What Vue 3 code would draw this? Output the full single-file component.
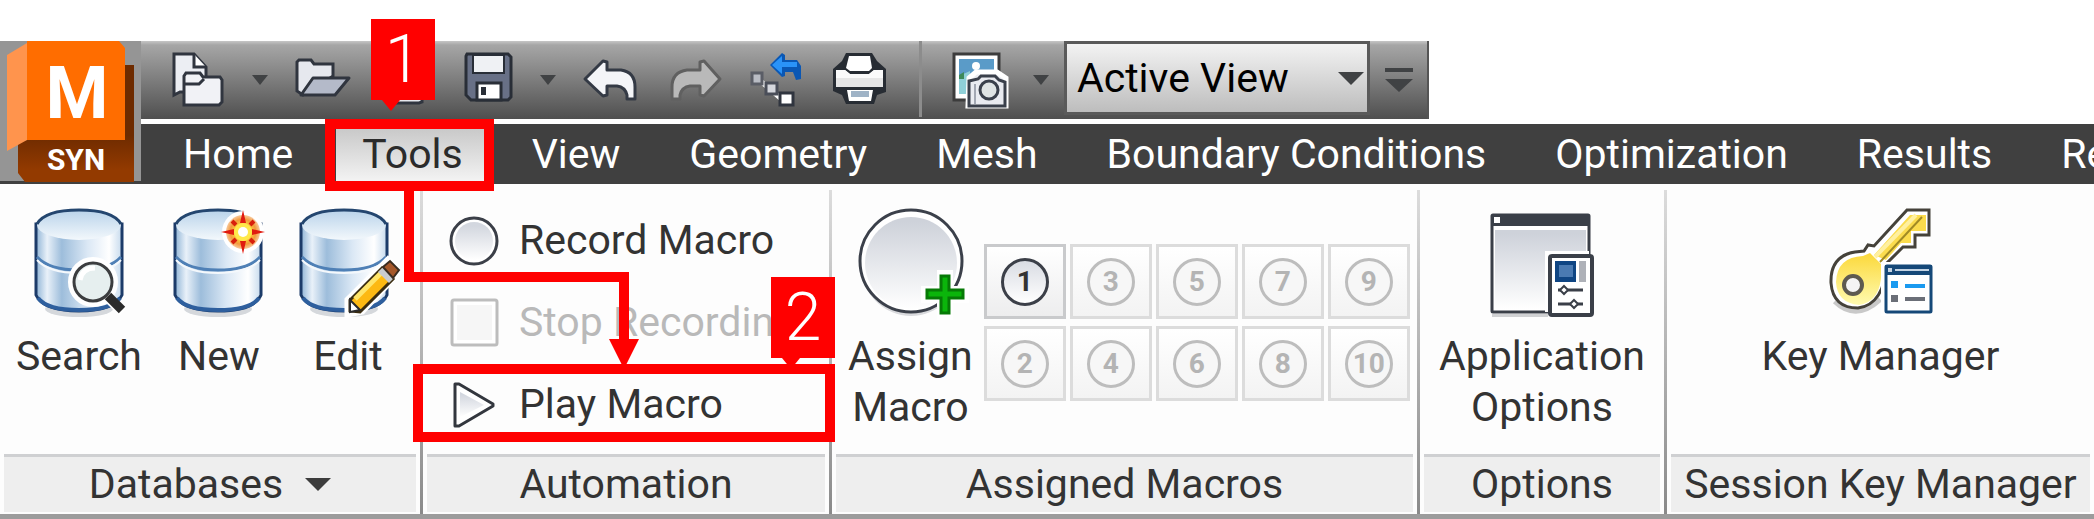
<template>
  <div class="app">
    <header class="head">
      <button class="logo" type="button" aria-label="Application menu">
        <svg width="141" height="141" viewBox="0 0 141 141">
          <defs>
            <linearGradient id="logoBase" x1="0" y1="0" x2="0" y2="1">
              <stop offset="0.6" stop-color="#6e2b00" />
              <stop offset="0.9" stop-color="#933a00" />
            </linearGradient>
          </defs>
          <path d="M18 100V132L25 141H134V24H110V90Z" fill="url(#logoBase)" />
          <path d="M7 14L27 2V99L7 110Z" fill="#ff944d" />
          <path d="M27 0H119L125 7V99H27Z" fill="#ff6d00" />
          <text x="77" y="77" class="logo-m">M</text>
          <text x="76" y="129" class="logo-syn">SYN</text>
        </svg>
      </button>

      <div class="quick">
        <div class="quick-tools">
          <button type="button" aria-label="New">
            <svg width="56" height="56" viewBox="0 0 56 56">
              <path d="M3 2H23L35 15V40H9L3 43Z" fill="#eceef3" stroke="#30353f" stroke-width="3" />
              <path d="M23 2V15H35" fill="#fff" stroke="#30353f" stroke-width="3" />
              <path d="M13 24L15 21H29L32 25H49L51 28V50L48 53H13Z" fill="#f1f2f6" stroke="#30353f" stroke-width="3" />
              <path d="M14 32H28L33 27" fill="none" stroke="#30353f" stroke-width="3" />
            </svg>
          </button>
          <button type="button" class="drop" aria-label="New options"><svg width="16" height="10"><path d="M0 0H16L8 10Z" fill="#404244" /></svg></button>
          <button type="button" aria-label="Open">
            <svg width="56" height="56" viewBox="0 0 56 56">
              <path d="M4 10L6 8H18L21 12H40V24L20 38L10 43L4 39Z" fill="#e6e8ee" stroke="#30353f" stroke-width="3" />
              <path d="M8 43L20 26H56L42 43Z" fill="#b4bac9" stroke="#30353f" stroke-width="3" stroke-linejoin="round" />
            </svg>
          </button>
          <button type="button" aria-label="Import">
            <svg width="56" height="56" viewBox="0 0 56 56">
              <path d="M12 12H46V50L43 51H14Z" fill="#e6e8ee" stroke="#30353f" stroke-width="3" />
            </svg>
          </button>
          <button type="button" aria-label="Save">
            <svg width="56" height="56" viewBox="0 0 56 56">
              <path d="M8 2H49L52 5V45L49 48H12L7 43V4Z" fill="#687086" stroke="#292e37" stroke-width="3" />
              <path d="M14 3H45V21H14Z" fill="#eff1f4" stroke="#292e37" stroke-width="2" />
              <path d="M18 31H42V48H18Z" fill="#fff" stroke="#292e37" stroke-width="3" />
              <path d="M22 35H27V43H22Z" fill="#292e37" />
            </svg>
          </button>
          <button type="button" class="drop" aria-label="Save options"><svg width="16" height="10"><path d="M0 0H16L8 10Z" fill="#404244" /></svg></button>
          <button type="button" aria-label="Undo">
            <svg width="56" height="56" viewBox="0 0 56 56">
              <path d="M4 27L22 9L26 10V18H40Q54 20 54 35V47H46V43Q44 35 36 34H26V43L22 44Z" fill="#f4f5f8" stroke="#343a45" stroke-width="3" stroke-linejoin="round" />
            </svg>
          </button>
          <button type="button" aria-label="Redo">
            <svg width="56" height="56" viewBox="0 0 56 56">
              <path d="M56 27L40 9L36 10V18H23Q8 20 8 35V47H16V43Q18 35 26 34H36V43L40 44Z" fill="#b9b9b9" stroke="#606060" stroke-width="3" stroke-linejoin="round" />
            </svg>
          </button>
          <button type="button" aria-label="Back to parent">
            <svg width="56" height="56" viewBox="0 0 56 56">
              <path d="M10 26L38 50" stroke="#fff" stroke-width="5" />
              <path d="M5 21H15V32H5Z" fill="#b9bcc4" stroke="#5a5d66" stroke-width="3" />
              <path d="M19 31H30V42H19Z" fill="#d5d7dd" stroke="#4a4e59" stroke-width="3" />
              <path d="M33 41H46V53H33Z" fill="#fff" stroke="#30353f" stroke-width="3" />
              <path d="M23 13L35 1L38 3V8H50L54 14V27L49 28L46 20H38V24L35 25Z" fill="#0a57b4" />
              <path d="M25 13L35 4V10H50V15H35V22Z" fill="#2a93f8" />
            </svg>
          </button>
          <button type="button" aria-label="Print">
            <svg width="56" height="56" viewBox="0 0 56 56">
              <path d="M16 1H42L47 9L56 17V40L47 43L44 52H16L12 43L3 39V17L12 9Z" fill="#272c33" />
              <path d="M19 4H40L42 16L39 19H20L16 16Z" fill="#fff" />
              <path d="M6 18H15L20 22H39L44 18H53V35H6Z" fill="#e6e6e6" />
              <path d="M6 18H15L20 22H39L44 18H53V26H6Z" fill="#fafafa" />
              <path d="M17 38H43L41 49H19Z" fill="#fff" />
              <path d="M21 39H39V45H21Z" fill="#9fb3c6" />
            </svg>
          </button>
          <i class="divider"></i>
          <button type="button" aria-label="Capture image">
            <svg width="56" height="56" viewBox="0 0 56 56">
              <path d="M2 2H47V48H2Z" fill="#fff" stroke="#3c3c3c" stroke-width="3" />
              <path d="M7 7H42V26L14 42H7Z" fill="#5a9bc8" />
              <path d="M7 24L18 19V30L14 42H7Z" fill="#8fd0d8" />
              <path d="M7 23L12 20V27H7Z" fill="#3c8a5a" />
              <circle cx="24" cy="14" r="4" fill="#fff" />
              <path d="M17 26L24 20H45L54 26V54H16Z" fill="#e9ebf0" stroke="#fff" stroke-width="5" />
              <path d="M17 29L26 27L29 24H43L47 28L53 30V54H17Z" fill="#e9ebf0" stroke="#3a404b" stroke-width="3" />
              <circle cx="37" cy="38" r="9" fill="#dfe4e4" stroke="#3a404b" stroke-width="3" />
              <path d="M23 32V52" stroke="#a2a7b2" stroke-width="2" />
            </svg>
          </button>
          <button type="button" class="drop" aria-label="Capture options"><svg width="16" height="10"><path d="M0 0H16L8 10Z" fill="#404244" /></svg></button>
        </div>
        <div class="combo">
          <select v-model="view" aria-label="View">
            <option>Active View</option>
          </select>
          <svg class="combo-arrow" width="26" height="13"><path d="M0 0H26L13 13Z" fill="#404244" /></svg>
        </div>
        <button type="button" class="more" aria-label="Customize">
          <svg width="28" height="24"><path d="M0 0H28V4H0ZM0 11H28L14 24Z" fill="#404244" /></svg>
        </button>
      </div>

      <nav class="tabs">
        <a v-for="tab in tabs" :key="tab" href="#" class="tab" :class="{ active: tab === current }" @click.prevent="current = tab">{{ tab }}</a>
      </nav>
    </header>

    <main class="ribbon">
      <section class="panel">
        <div class="panel-body databases">
          <button type="button" class="big">
            <svg width="104" height="112" viewBox="0 0 104 112">
              <defs>
                <linearGradient id="dbSide">
                  <stop offset="0" stop-color="#8fb4d6" />
                  <stop offset="0.13" stop-color="#e9f1f9" />
                  <stop offset="0.3" stop-color="#9dbddb" />
                  <stop offset="0.6" stop-color="#dbe8f5" />
                  <stop offset="0.85" stop-color="#ffffff" />
                  <stop offset="1" stop-color="#c6daed" />
                </linearGradient>
                <linearGradient id="dbTop" x1="0" y1="0" x2="0" y2="1">
                  <stop offset="0" stop-color="#b9d3ea" />
                  <stop offset="1" stop-color="#f3f8fc" />
                </linearGradient>
                <symbol id="db" viewBox="0 0 94 112" width="94" height="112">
                  <ellipse cx="46" cy="102" rx="34" ry="8" fill="#d5d8dc" />
                  <path d="M3 17V88Q10 104 46 104Q82 104 89 88V17Z" fill="url(#dbSide)" stroke="#1c3b69" stroke-width="3" />
                  <ellipse cx="46" cy="18" rx="42" ry="15" fill="url(#dbTop)" />
                  <path d="M4 17Q12 3 46 3Q80 3 88 17" fill="none" stroke="#24466f" stroke-width="3" />
                  <path d="M4 50Q16 63 46 63Q76 63 88 50" fill="none" stroke="#4f80b6" stroke-width="3" />
                  <path d="M4 53Q16 66 46 66Q76 66 88 53" fill="none" stroke="#f4f8fc" stroke-width="2" />
                  <path d="M5 91Q14 103 46 103Q78 103 87 91" fill="none" stroke="#2e5f9e" stroke-width="4" />
                </symbol>
              </defs>
              <use href="#db" x="6" />
              <g fill="none" stroke="#fff" stroke-width="10">
                <circle cx="66" cy="75" r="20" /><path d="M80 90L96 105" />
              </g>
              <path d="M81 89L95 103" stroke="#2b2b2b" stroke-width="9" />
              <circle cx="66" cy="75" r="19" fill="#e6efef" stroke="#3b3d3f" stroke-width="3" />
              <path d="M53 73Q55 61 68 61" fill="none" stroke="#fff" stroke-width="5" />
            </svg>
            <span>Search</span>
          </button>
          <button type="button" class="big">
            <svg width="104" height="112" viewBox="0 0 104 112">
              <defs>
                <radialGradient id="glow">
                  <stop offset="0.15" stop-color="#ffffff" />
                  <stop offset="0.35" stop-color="#ffe23a" />
                  <stop offset="0.75" stop-color="#f39a3c" />
                  <stop offset="1" stop-color="#f8c89a" />
                </radialGradient>
              </defs>
              <use href="#db" x="5" />
              <circle cx="76" cy="25" r="21" fill="#fff" />
              <circle cx="76" cy="25" r="17" fill="url(#glow)" />
              <path d="M76 3L79 16H73ZM76 47L79 34H73ZM54 25L67 22V28ZM98 25L85 22V28Z" fill="#e01b10" />
              <path d="M65 14L69 18M87 14L83 18M65 36L69 32M87 36L83 32" stroke="#d8200c" stroke-width="4" />
              <circle cx="76" cy="25" r="9" fill="#ffe84a" />
              <circle cx="76" cy="25" r="5" fill="#fff" />
            </svg>
            <span>New</span>
          </button>
          <button type="button" class="big">
            <svg width="104" height="112" viewBox="0 0 104 112">
              <use href="#db" x="2" />
              <path d="M52 107V93L92 53L104 64L66 104Z" fill="#fff" stroke="#fff" stroke-width="7" />
              <path d="M54 104V93L86 61L97 72L64 105Z" fill="#fdb913" stroke="#3a2c10" stroke-width="3" />
              <path d="M59 92L86 65" stroke="#ffe56a" stroke-width="5" />
              <path d="M54 105V93L64 103Z" fill="#fff" stroke="#2b2b2b" stroke-width="2" />
              <path d="M82 65L87 60L98 71L93 76Z" fill="#c9ccd0" />
              <path d="M87 60L94 54L103 63L97 71Z" fill="#a5582a" stroke="#3a2c20" stroke-width="2" />
            </svg>
            <span>Edit</span>
          </button>
        </div>
        <h2 class="caption">Databases <svg width="26" height="13"><path d="M0 0H26L13 13Z" fill="#3c3c3c" /></svg></h2>
      </section>

      <section class="panel">
        <div class="panel-body automation">
          <button type="button" class="row">
            <svg width="49" height="49" viewBox="0 0 49 49">
              <defs>
                <linearGradient id="silver" x1="0" y1="0" x2="0" y2="1">
                  <stop offset="0.1" stop-color="#d3d7df" />
                  <stop offset="1" stop-color="#ffffff" />
                </linearGradient>
              </defs>
              <circle cx="24" cy="25" r="23" fill="#fff" stroke="#3b3f48" stroke-width="3" />
              <circle cx="24" cy="25" r="19" fill="url(#silver)" />
            </svg>
            Record Macro
          </button>
          <button type="button" class="row" disabled>
            <svg width="49" height="49" viewBox="0 0 49 49">
              <rect x="2" y="2" width="45" height="45" rx="2" fill="#fff" stroke="#bdbdbd" stroke-width="3" />
              <rect x="7" y="7" width="35" height="35" fill="#f6f6f6" />
            </svg>
            Stop Recording
          </button>
          <button type="button" class="row">
            <svg width="49" height="49" viewBox="0 0 49 49">
              <path d="M5 4H9L43 24V26L9 46H5Z" fill="#fff" stroke="#33373e" stroke-width="3" stroke-linejoin="round" />
              <path d="M10 12L34 25L10 37Z" fill="url(#silver)" />
            </svg>
            Play Macro
          </button>
        </div>
        <h2 class="caption">Automation</h2>
      </section>

      <section class="panel">
        <div class="panel-body assigned">
          <button type="button" class="big">
            <svg width="104" height="112" viewBox="0 0 104 112">
              <defs>
                <linearGradient id="disc" x1="0" y1="0" x2="0" y2="1">
                  <stop offset="0.05" stop-color="#ced2da" />
                  <stop offset="1" stop-color="#ffffff" />
                </linearGradient>
              </defs>
              <ellipse cx="53" cy="58" rx="50" ry="51" fill="#d9dadd" />
              <circle cx="53" cy="54" r="51" fill="#fff" stroke="#3b404a" stroke-width="3" />
              <circle cx="53" cy="56" r="46" fill="url(#disc)" />
              <path d="M82 66H92V82H108V93H92V110H82V93H66V82H82Z" fill="#fff" stroke="#fff" stroke-width="6" />
              <path d="M83 69H91V83H105V91H91V106H83V91H69V83H83Z" fill="#0bb50b" stroke="#077a07" stroke-width="3" />
            </svg>
            <span>Assign<br />Macro</span>
          </button>
          <div class="slots">
            <button v-for="n in slots" :key="n" type="button" class="slot" :disabled="n !== 1"><span>{{ n }}</span></button>
          </div>
        </div>
        <h2 class="caption">Assigned Macros</h2>
      </section>

      <section class="panel">
        <div class="panel-body centered">
          <button type="button" class="big">
            <svg width="104" height="112" viewBox="0 0 104 112">
              <path d="M2 107H58V110H2Z" fill="#d0d1d3" />
              <rect x="2" y="8" width="97" height="97" rx="1" fill="#fff" stroke="#3a3f48" stroke-width="3" />
              <path d="M2 8H99V19H2Z" fill="#3a3f48" />
              <path d="M4 10H10V16H4Z" fill="#fff" />
              <rect x="5" y="23" width="91" height="79" fill="url(#disc)" />
              <path d="M55 44H99V105H55Z" fill="#fff" />
              <rect x="60" y="49" width="42" height="59" rx="2" fill="#fff" stroke="#3a3f48" stroke-width="4" />
              <path d="M65 54H86V75H65Z" fill="#0f4583" />
              <path d="M69 58H83V70H69Z" fill="#4a7ab2" />
              <path d="M89 54H96V75H89Z" fill="#aeb1b8" />
              <path d="M68 83H93M68 97H93" stroke="#3a3f48" stroke-width="3" />
              <path d="M74 79L78 83L74 87L70 83ZM84 93L88 97L84 101L80 97Z" fill="#fff" stroke="#3a3f48" stroke-width="2" />
            </svg>
            <span>Application<br />Options</span>
          </button>
        </div>
        <h2 class="caption">Options</h2>
      </section>

      <section class="panel last">
        <div class="panel-body centered">
          <button type="button" class="big">
            <svg width="104" height="112" viewBox="0 0 104 112">
              <defs>
                <linearGradient id="gold" x1="0" y1="0" x2="0" y2="1">
                  <stop offset="0" stop-color="#fbd83a" />
                  <stop offset="1" stop-color="#fffbb0" />
                </linearGradient>
              </defs>
              <path d="M7 94Q28 114 52 92" fill="none" stroke="#c9c9c9" stroke-width="6" />
              <path d="M79 3H101V28H87V40H75L59 56Q56 98 30 101Q5 101 3 76Q2 49 27 45L36 44L40 38L46 39Z" fill="#fff" stroke="#45423a" stroke-width="3" />
              <path d="M82 8H98V24H83V36H73L58 53L46 48Z" fill="#fbdc4d" />
              <path d="M94 10L52 55" stroke="#a08a25" stroke-width="2" />
              <path d="M88 8L47 50" stroke="#fff0a0" stroke-width="4" />
              <path d="M42 46L53 57Q56 94 31 98Q9 96 8 75Q9 50 35 49Z" fill="url(#gold)" />
              <circle cx="25" cy="78" r="9" fill="#f4f4f4" stroke="#5d5a50" stroke-width="4" />
              <path d="M53 55H104V109H53Z" fill="#fff" />
              <rect x="58" y="59" width="45" height="46" rx="1" fill="#fff" stroke="#154878" stroke-width="3" />
              <path d="M57 58H104V68H57Z" fill="#154878" />
              <path d="M60 61H64V65H60ZM67 62H101V64H67Z" fill="#c3d3e3" />
              <path d="M63 74H70V81H63ZM77 77H97V81H77Z" fill="#1a9af0" />
              <path d="M63 88H70V95H63ZM77 90H97V94H77Z" fill="#6b6f78" />
            </svg>
            <span>Key Manager</span>
          </button>
        </div>
        <h2 class="caption">Session Key Manager</h2>
      </section>
    </main>

    <!-- tutorial callouts over the ribbon -->
    <div class="mark mark-tools"></div>
    <div class="mark mark-play"></div>
    <svg class="route" width="235" height="180" viewBox="0 0 235 180">
      <path d="M5 0V86H220V152" fill="none" stroke="#f00" stroke-width="10" />
      <path d="M205 148H235L220 178Z" fill="#f00" />
    </svg>
    <div class="step step-one">1</div>
    <div class="step step-two">2</div>
  </div>
</template>

<script setup>
import { ref } from "vue";

// ribbon tabs
const tabs = ['Home', 'Tools', 'View', 'Geometry', 'Mesh', 'Boundary Conditions', 'Optimization', 'Results', 'Report']
// current tab
const current = ref('Tools')
// selected view
const view = ref('Active View')
// macro slots, filled row by row
const slots = [1, 3, 5, 7, 9, 2, 4, 6, 8, 10]
</script>

<style>
body {
  margin: 0;
  background: #fff;
}
</style>

<style scoped>
.app {
  position: relative;
  overflow: hidden;
  padding-top: 41px;
  font-family: Roboto, "Noto Sans CJK KR", sans-serif;
  font-size: 41px;
  color: #333;
}

svg {
  display: block;
  flex: none;
  overflow: visible;
}

button {
  margin: 0;
  padding: 0;
  border: 0;
  background: none;
  font: inherit;
  color: inherit;
}

.head {
  display: grid;
  grid-template-columns: 141px minmax(0, 1fr);
  grid-template-rows: 78px 65px;
}

.logo {
  grid-row: 1 / 3;
  background: #959595;
  border-bottom: 3px solid #404040;
}

.logo-m,
.logo-syn {
  font-weight: 700;
  fill: #fff;
  text-anchor: middle;
}

.logo-m {
  font-size: 72px;
}

.logo-syn {
  font-size: 30px;
}

.quick {
  display: flex;
  justify-self: start;
  border-right: 2px solid #555;
  background: linear-gradient(#c6c6c6 0, #a6a6a6 4px, #4f4f4f 100%);
}

.quick-tools {
  display: flex;
  align-items: center;
  gap: 27px;
  padding-left: 30px;
}

.quick-tools .drop {
  margin: 0 -2px;
}

.divider {
  align-self: stretch;
  width: 3px;
  margin: 0 3px 2px 6px;
  background: #8c8c8c;
}

.combo {
  position: relative;
  width: 306px;
  margin: 0 0 4px 17px;
}

.combo select {
  appearance: none;
  box-sizing: border-box;
  width: 100%;
  height: 100%;
  padding: 0 0 0 10px;
  border: 3px solid #5a5a5a;
  border-radius: 0;
  background: linear-gradient(#f3f3f3, #bdbdbd);
  font: inherit;
  color: #000;
}

.combo-arrow {
  position: absolute;
  top: 31px;
  right: 6px;
  pointer-events: none;
}

.more {
  display: flex;
  align-items: center;
  justify-content: center;
  width: 57px;
}

.tabs {
  display: flex;
  gap: 17px;
  min-width: 0;
  margin-top: 5px;
  padding: 5px 0 3px 16px;
  background: #404040;
  overflow: hidden;
}

.tab {
  flex: none;
  padding: 0 26px;
  line-height: 50px;
  color: #fff;
  text-decoration: none;
  white-space: nowrap;
}

.tab.active {
  background: linear-gradient(#c9c9c9, #f3f3f3);
  color: #2b2b2b;
}

.ribbon {
  display: grid;
  grid-template-columns: 423fr 409fr 588fr 247fr 427fr;
  border-bottom: 5px solid #9c9c9c;
  background: #fdfdfd;
}

.panel {
  display: flex;
  flex-direction: column;
  min-width: 0;
  padding-right: 3px;
  background: linear-gradient(#dcdcdc, #8a8a8a) right bottom / 3px calc(100% - 6px) no-repeat;
}

.panel.last {
  background: none;
  padding-right: 0;
}

.panel-body {
  flex: 1;
  display: flex;
  align-items: flex-start;
  padding: 23px 0 21px;
}

.caption {
  display: flex;
  align-items: center;
  justify-content: center;
  gap: 22px;
  margin: 0 4px 2px;
  border-top: 3px solid #cfd0d2;
  background: #eee;
  font-size: 41px;
  font-weight: 400;
  line-height: 55px;
  white-space: nowrap;
}

.big {
  display: flex;
  flex-direction: column;
  align-items: center;
  gap: 12px;
  line-height: 51px;
}

.databases {
  gap: 25px;
  padding-left: 16px;
}

.panel-body.automation {
  flex-direction: column;
  padding: 15px 0 9px 27px;
}

.row {
  display: flex;
  align-items: center;
  gap: 20px;
  height: 82px;
  white-space: nowrap;
}

.row:disabled {
  color: #b9b9b9;
}

.assigned {
  gap: 11px;
  padding-left: 16px;
}

.slots {
  display: grid;
  grid-template-columns: repeat(5, 82px);
  gap: 7px 4px;
  margin-top: 37px;
}

.slot {
  display: flex;
  align-items: center;
  justify-content: center;
  height: 75px;
  border: 3px solid #c9cacc;
  background: linear-gradient(#fff, #ededee);
  font-size: 28px;
  font-weight: 700;
}

.slot span {
  box-sizing: border-box;
  width: 48px;
  height: 48px;
  border: 3px solid #3b3f48;
  border-radius: 50%;
  background: linear-gradient(#d9dce3, #fff);
  line-height: 42px;
  text-align: center;
}

.slot:disabled {
  border-color: #dcdcdc;
  background: linear-gradient(#fff, #f3f3f3);
  color: #b4b4b4;
}

.slot:disabled span {
  border-color: #bdbdbd;
  background: #f7f7f7;
}

.centered {
  justify-content: center;
}

.mark {
  position: absolute;
  box-sizing: border-box;
  border: 10px solid #f00;
  pointer-events: none;
}

.mark-tools {
  left: 325px;
  top: 119px;
  width: 169px;
  height: 72px;
}

.mark-play {
  left: 413px;
  top: 364px;
  width: 422px;
  height: 78px;
}

.route {
  position: absolute;
  left: 404px;
  top: 191px;
  pointer-events: none;
}

.step {
  position: absolute;
  width: 64px;
  background: #f00;
  color: #fff;
  font-size: 66px;
  font-weight: 300;
  line-height: 81px;
  text-align: center;
}

.step::after {
  content: "";
  position: absolute;
  left: 11px;
  top: 100%;
  border: 9px solid transparent;
  border-top: 11px solid #f00;
  border-bottom: 0;
}

.step-one {
  left: 371px;
  top: 19px;
}

.step-two {
  left: 771px;
  top: 277px;
}
</style>
